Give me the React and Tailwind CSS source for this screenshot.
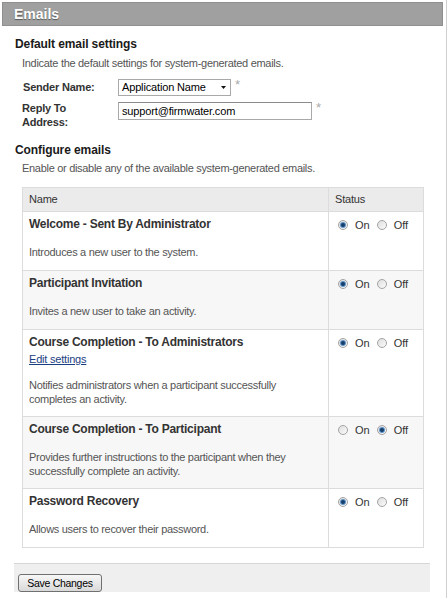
import { useState } from "react";

const emails = [
  {
    id: "welcome",
    title: "Welcome - Sent By Administrator",
    desc: "Introduces a new user to the system.",
    on: true,
  },
  {
    id: "invite",
    title: "Participant Invitation",
    desc: "Invites a new user to take an activity.",
    on: true,
  },
  {
    id: "admin",
    title: "Course Completion - To Administrators",
    desc: "Notifies administrators when a participant successfully completes an activity.",
    on: true,
    edit: true,
    long: true,
  },
  {
    id: "participant",
    title: "Course Completion - To Participant",
    desc: "Provides further instructions to the participant when they successfully complete an activity.",
    on: false,
    long: true,
  },
  {
    id: "password",
    title: "Password Recovery",
    desc: "Allows users to recover their password.",
    on: true,
  },
];

const Radio = ({ checked, onClick }) => (
  <span
    onClick={onClick}
    className="w-[10px] h-[10px] rounded-full border border-[#a3a3a3] bg-gradient-to-br from-[#dedede] to-[#fbfbfb] flex items-center justify-center cursor-pointer shrink-0"
  >
    {checked && (
      <span className="w-[4px] h-[4px] rounded-full bg-[#163f6b] shadow-[0_0_0_1px_#5d93c6]" />
    )}
  </span>
);

const App = () => {
  const [status, setStatus] = useState(
    Object.fromEntries(emails.map((e) => [e.id, e.on]))
  );

  return (
    <div className="w-[447px] min-h-screen border-r border-[#cfcfcf] bg-white pt-[2px] pl-[2px] font-['Liberation_Sans',Arial,sans-serif]">
      <div className="w-[441px] h-[24px] bg-[#a0a0a0] border border-[#8f8f8f] flex items-center pl-[11px]">
        <span className="text-[14px] font-bold text-white leading-none [text-shadow:0_1px_1px_rgba(0,0,0,0.45)]">
          Emails
        </span>
      </div>

      <h2 className="mt-[10px] pl-[13px] text-[12px] leading-[16px] font-bold text-[#1a1a1a] tracking-[-0.1px]">
        Default email settings
      </h2>
      <p className="mt-[4px] pl-[20px] text-[11px] leading-[14px] text-[#555] tracking-[-0.3px]">
        Indicate the default settings for system-generated emails.
      </p>

      <div className="pl-[20px] mt-[9px] flex flex-col gap-[5px]">
        <div className="flex items-start">
          <label className="w-[96px] pl-[1px] text-[11px] leading-[16px] font-bold text-[#333] tracking-[-0.2px]">
            Sender Name:
          </label>
          <div className="w-[113px] h-[17px] border border-[#a9a9a9] bg-white flex items-center justify-between pl-[3px] pr-[4px]">
            <span className="text-[11px] leading-none text-black tracking-[-0.15px]">
              Application Name
            </span>
            <svg width="5" height="3" viewBox="0 0 5 3">
              <path d="M0 0h5L2.5 3z" fill="#111" />
            </svg>
          </div>
          <span className="ml-[4px] mt-[-1px] text-[13px] leading-[13px] text-[#aaa]">*</span>
        </div>
        <div className="flex items-start">
          <label className="w-[96px] text-[11px] leading-[14px] font-bold text-[#333] tracking-[-0.2px]">
            Reply To
            <br />
            Address:
          </label>
          <div className="mt-[1px] w-[194px] h-[18px] border border-[#a9a9a9] border-t-[#8a8a8a] bg-white flex items-center pl-[3px]">
            <span className="text-[11px] leading-none text-black tracking-[-0.15px]">
              support@firmwater.com
            </span>
          </div>
          <span className="ml-[4px] text-[13px] leading-[13px] text-[#aaa]">*</span>
        </div>
      </div>

      <h2 className="mt-[13px] pl-[13px] text-[12px] leading-[16px] font-bold text-[#1a1a1a] tracking-[-0.1px]">
        Configure emails
      </h2>
      <p className="mt-[3px] pl-[20px] text-[11px] leading-[14px] text-[#555] tracking-[-0.3px]">
        Enable or disable any of the available system-generated emails.
      </p>

      <div className="ml-[20px] mt-[12px] w-[402px] border border-[#dcdcdc]">
        <div className="flex bg-[#ebebeb] h-[24px] border-b border-[#dcdcdc] text-[11px] text-[#333] tracking-[-0.2px]">
          <div className="w-[306px] border-r border-[#dcdcdc] pl-[6px] flex items-center">
            Name
          </div>
          <div className="flex-1 pl-[6px] flex items-center">Status</div>
        </div>
        {emails.map((email, i) => (
          <div
            key={email.id}
            className={`flex ${i % 2 === 1 ? "bg-[#f7f7f7]" : "bg-white"} ${
              i < emails.length - 1 ? "border-b border-[#dcdcdc]" : ""
            }`}
          >
            <div
              className={`w-[306px] border-r border-[#dcdcdc] pl-[6px] pr-[6px] pt-[5px] ${
                email.long ? "pb-[10px]" : "pb-[11px]"
              }`}
            >
              <div className="text-[12px] leading-[14px] font-bold text-[#333] tracking-[-0.25px]">
                {email.title}
              </div>
              {email.edit && (
                <a
                  href="#"
                  className="block mt-[3px] text-[11px] leading-[14px] text-[#1a3e82] underline tracking-[-0.2px]"
                >
                  Edit settings
                </a>
              )}
              <p
                className={`${
                  email.edit ? "mt-[12px]" : "mt-[14px]"
                } text-[11px] leading-[14px] text-[#555] tracking-[-0.3px]`}
              >
                {email.desc}
              </p>
            </div>
            <div className="flex-1 pt-[6px] pl-[9px]">
              <div className="flex items-center h-[14px] text-[11px] text-[#333]">
                <Radio
                  checked={status[email.id]}
                  onClick={() => setStatus({ ...status, [email.id]: true })}
                />
                <span className="ml-[7px]">On</span>
                <span className="ml-[7px]">
                  <Radio
                    checked={!status[email.id]}
                    onClick={() => setStatus({ ...status, [email.id]: false })}
                  />
                </span>
                <span className="ml-[7px]">Off</span>
              </div>
            </div>
          </div>
        ))}
      </div>

      <div className="ml-[12px] mt-[15px] w-[416px] h-[29px] bg-[#efefef] border-t border-[#d6d6d6] pl-[4px] pt-[6px]">
        <button className="w-[84px] h-[18px] border border-[#707070] rounded-[3px] bg-gradient-to-b from-[#f7f7f7] to-[#d9d9d9] text-[10.5px] leading-none text-black tracking-[-0.3px]">
          Save Changes
        </button>
      </div>
    </div>
  );
};

export default App;
